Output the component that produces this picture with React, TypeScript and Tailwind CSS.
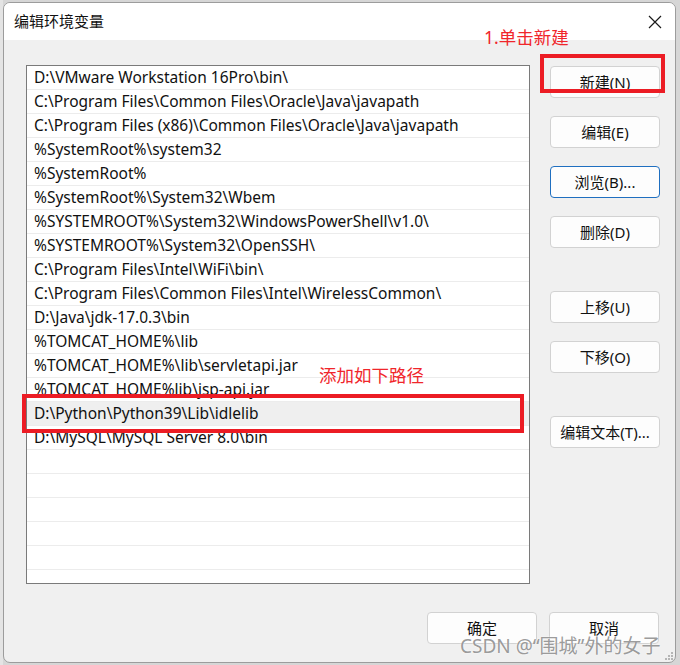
import React from "react";

const paths = [
  "D:\\VMware Workstation 16Pro\\bin\\",
  "C:\\Program Files\\Common Files\\Oracle\\Java\\javapath",
  "C:\\Program Files (x86)\\Common Files\\Oracle\\Java\\javapath",
  "%SystemRoot%\\system32",
  "%SystemRoot%",
  "%SystemRoot%\\System32\\Wbem",
  "%SYSTEMROOT%\\System32\\WindowsPowerShell\\v1.0\\",
  "%SYSTEMROOT%\\System32\\OpenSSH\\",
  "C:\\Program Files\\Intel\\WiFi\\bin\\",
  "C:\\Program Files\\Common Files\\Intel\\WirelessCommon\\",
  "D:\\Java\\jdk-17.0.3\\bin",
  "%TOMCAT_HOME%\\lib",
  "%TOMCAT_HOME%\\lib\\servletapi.jar",
  "%TOMCAT_HOME%lib\\jsp-api.jar",
  "D:\\Python\\Python39\\Lib\\idlelib",
  "D:\\MySQL\\MySQL Server 8.0\\bin",
  "",
  "",
  "",
  "",
  "",
  "",
];

const font = "font-['Noto_Sans','Noto_Sans_CJK_SC',sans-serif]";

function Btn({ label, focused, className = "" }: { label: string; focused?: boolean; className?: string }) {
  return (
    <div
      className={`w-[110px] h-[32px] flex items-center justify-center rounded-[4px] bg-[#fdfdfd] text-[15px] text-[#111111] ${
        focused ? "border border-[#1f6fc0]" : "border border-[#d2d2d2]"
      } ${className}`}
    >
      {label}
    </div>
  );
}

export default function App() {
  return (
    <div className={`relative w-[680px] h-[665px] bg-[#d6d6d6] overflow-hidden ${font}`}>
      <div className="absolute left-0 top-0 w-[3px] h-full bg-[#e4e4e4]" />
      {/* dialog window */}
      <div className="relative ml-[3px] mt-[2px] w-[673px] h-[661px] rounded-[7px] border border-[#9c9c9c] overflow-hidden bg-[#f0f0f0] flex flex-col">
        <div className="h-[37px] bg-white flex items-center justify-between pl-[10px] pr-[12px] shrink-0">
          <span className="text-[15px] text-[#111111]">编辑环境变量</span>
          <svg width="14" height="14" viewBox="0 0 14 14" className="mr-[1px]">
            <path d="M1 1 L13 13 M13 1 L1 13" stroke="#1a1a1a" strokeWidth="1.2" />
          </svg>
        </div>

        <div className="flex flex-1 pl-[22px] pt-[25px]">
          <div className="w-[504px] h-[519px] border border-[#7a7a7a] bg-white overflow-hidden">
            {paths.map((p, i) => (
              <div
                key={i}
                className={`h-[24px] flex items-center pl-[7px] text-[15.5px] text-[#111111] whitespace-nowrap border-b border-[#ececec] ${
                  i === 14 ? "bg-[#efefef]" : ""
                }`}
              >
                {p}
              </div>
            ))}
          </div>

          <div className="flex flex-col ml-[20px] pt-[1px]">
            <Btn label="新建(N)" />
            <Btn label="编辑(E)" className="mt-[18px]" />
            <Btn label="浏览(B)..." focused className="mt-[18px]" />
            <Btn label="删除(D)" className="mt-[18px]" />
            <Btn label="上移(U)" className="mt-[43px]" />
            <Btn label="下移(O)" className="mt-[18px]" />
            <Btn label="编辑文本(T)..." className="mt-[43px]" />
          </div>
        </div>

        <div className="flex justify-end gap-[12px] pr-[16px] pb-[18px]">
          <Btn label="确定" />
          <Btn label="取消" />
        </div>

        {/* resize grip */}
        <div className="absolute right-[2px] bottom-[2px] grid grid-cols-3 gap-[1px]">
          {[0, 1, 2, 3, 4, 5, 6, 7, 8].map((k) => (
            <div key={k} className={`w-[2px] h-[2px] ${[2, 4, 5, 6, 7, 8].includes(k) ? "bg-[#b5b5b5]" : ""}`} />
          ))}
        </div>
      </div>

      {/* annotations */}
      <div className="absolute left-[484px] top-[29px] text-[17.5px] leading-none text-[#f0262b]">1.单击新建</div>
      <div className="absolute left-[540px] top-[54px] w-[125px] h-[39px] border-[4px] border-[#ec1c24]" />
      <div className="absolute left-[319px] top-[367px] text-[17.5px] leading-none text-[#f0262b]">添加如下路径</div>
      <div className="absolute left-[22px] top-[394px] w-[502px] h-[39px] border-[4px] border-[#ec1c24]" />

      {/* watermark */}
      <div className="absolute left-[460px] top-[637px] text-[19px] leading-none text-[#8e8e8e]/90 [text-shadow:0_0_2px_#ffffff]">
        CSDN @“围城”外的女子
      </div>
    </div>
  );
}
